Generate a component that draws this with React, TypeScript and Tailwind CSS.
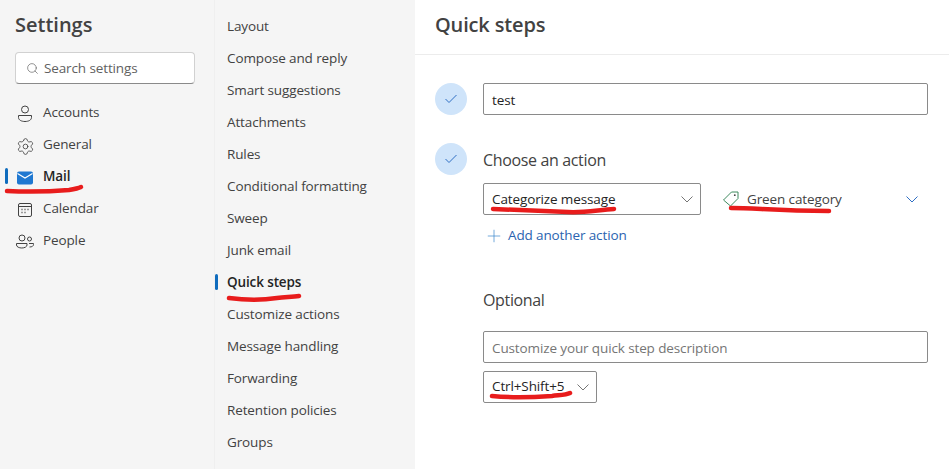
import { Plus, Search, Settings } from "lucide-react"

const font = "font-['Open_Sans','Noto_Sans',sans-serif]"

function Check() {
  return (
    <div className="w-8 h-8 rounded-full bg-[#cfe4fa] flex items-center justify-center shrink-0">
      <svg width="14" height="10" viewBox="0 0 14 10" fill="none" stroke="#2f6fc4" strokeWidth="1">
        <path d="M1.500 5l3.500 3.500 7.500-7.500" />
      </svg>
    </div>
  )
}

function Chev({ color = "#757575" }: { color?: string }) {
  return (
    <svg width="12" height="7" viewBox="0 0 12 7" fill="none" stroke={color} strokeWidth="1" className="shrink-0">
      <path d="M0.500 0.500l5.500 5.500 5.500-5.500" />
    </svg>
  )
}

function AccountIcon() {
  return (
    <svg width="20" height="20" viewBox="0 0 20 20" fill="none" stroke="#424242" strokeWidth="1">
      <circle cx="10" cy="5.500" r="3.500" />
      <path d="M3.500 11.500h13v2c0 2.500-3 4-6.500 4s-6.500-1.500-6.500-4z" />
    </svg>
  )
}

function MailIcon() {
  return (
    <svg width="18" height="16" viewBox="0 0 18 16">
      <rect x="1" y="1.500" width="16" height="13" rx="2" fill="#1f78d1" />
      <path d="M1.500 3.500L9 8l7.500-4.500" fill="none" stroke="#ffffff" strokeWidth="1.200" />
    </svg>
  )
}

function CalendarIcon() {
  return (
    <svg width="20" height="20" viewBox="0 0 20 20" fill="none" stroke="#424242" strokeWidth="1">
      <rect x="3.500" y="3.500" width="13" height="13" rx="1.500" />
      <path d="M3.500 6.500h13" />
      <path d="M6.500 9.500h1M9.500 9.500h1M12.500 9.500h1M6.500 12.500h1M9.500 12.500h1" strokeWidth="1.500" />
    </svg>
  )
}

function PeopleIcon() {
  return (
    <svg width="20" height="20" viewBox="0 0 20 20" fill="none" stroke="#424242" strokeWidth="1">
      <circle cx="7" cy="6" r="3" />
      <circle cx="14.500" cy="7" r="2" />
      <path d="M1.500 11.500h10.500v1.500c0 1.800-2.500 3-5.200 3s-5.300-1.200-5.300-3z" />
      <path d="M14 11.500h4.500v1c0 1.500-1.500 2.500-4 2.500" />
    </svg>
  )
}

function TagIcon() {
  return (
    <svg width="18" height="18" viewBox="0 0 18 18" fill="none" strokeWidth="1" className="shrink-0">
      <path d="M1.500 10L9.500 2h6.500v6.500L8.500 16z" stroke="#3f8a5f" />
      <circle cx="12.800" cy="5.200" r="0.900" fill="#424242" />
    </svg>
  )
}

const nav = [
  { label: "Accounts", icon: <AccountIcon /> },
  { label: "General", icon: <Settings size={19} strokeWidth={1.050} className="text-[#424242]" /> },
  { label: "Mail", icon: <MailIcon />, active: true },
  { label: "Calendar", icon: <CalendarIcon /> },
  { label: "People", icon: <PeopleIcon /> },
]

const sections = [
  "Layout",
  "Compose and reply",
  "Smart suggestions",
  "Attachments",
  "Rules",
  "Conditional formatting",
  "Sweep",
  "Junk email",
  "Quick steps",
  "Customize actions",
  "Message handling",
  "Forwarding",
  "Retention policies",
  "Groups",
]

export default function App() {
  return (
    <div className={`relative w-[949px] h-[469px] overflow-hidden flex bg-white text-[13.5px] tracking-[-0.12px] text-[#424242] ${font}`}>
      {/* settings nav */}
      <div className="w-[215px] shrink-0 bg-[#f5f5f5] border-r border-[#efefef]">
        <h1 className="pl-[15px] pt-[10px] h-[52px] text-[20px] leading-[30px] tracking-normal font-semibold text-[#424242]">Settings</h1>
        <div className="ml-[15px] w-[180px] h-8 bg-white rounded border border-[#d1d1d1] border-b-[#8a8a8a] flex items-center pl-[10px] gap-[5px] text-[#616161]">
          <Search size={13} strokeWidth={1.250} className="text-[#616161]" />
          <span>Search settings</span>
        </div>
        <div className="mt-[12px]">
          {nav.map((n) => (
            <div key={n.label} className={`h-8 flex items-center relative pl-[15px] gap-[8px] ${n.active ? "font-semibold text-[#242424]" : ""}`}>
              {n.active && <div className="absolute left-[5px] top-2 w-[3px] h-4 rounded-sm bg-[#0f6cbd]" />}
              <span className="w-5 h-6 pt-[4px] flex items-center justify-center">{n.icon}</span>
              <span>{n.label}</span>
            </div>
          ))}
        </div>
      </div>

      {/* mail sections */}
      <div className="w-[200px] shrink-0 bg-[#f5f5f5] pt-[10px]">
        {sections.map((s) => (
          <div key={s} className={`h-8 flex items-center relative pl-[12px] ${s === "Quick steps" ? "font-semibold text-[#242424]" : ""}`}>
            {s === "Quick steps" && <div className="absolute left-0 top-2 w-[3px] h-4 rounded-sm bg-[#0f6cbd]" />}
            {s}
          </div>
        ))}
      </div>

      {/* quick step form */}
      <div className="flex-1 min-w-0">
        <div className="h-[55px] border-b border-[#ececec] pl-5 pt-[10px]">
          <h2 className="text-[20px] leading-[30px] tracking-[-0.15px] font-semibold text-[#424242]">Quick steps</h2>
        </div>
        <div className="pl-5 pr-[21px] pt-[28px]">
          <div className="flex gap-[16px]">
            <Check />
            <div className="flex-1 h-8 border border-[#8a8a8a] rounded-[2px] flex items-center px-2 pt-[2px] text-[#242424]">test</div>
          </div>
          <div className="flex gap-[16px] mt-[28px]">
            <Check />
            <div className="flex-1">
              <div className="text-[16px] tracking-[-0.35px] leading-[34px] h-8">Choose an action</div>
              <div className="flex items-center mt-[8px]">
                <div className="w-[218px] h-8 border border-[#8a8a8a] rounded-[2px] flex items-center justify-between pl-2 pr-[7px] text-[#242424]">
                  <span>Categorize message</span>
                  <Chev />
                </div>
                <div className="ml-[21px] flex items-center w-[196px] justify-between">
                  <div className="flex items-center gap-[7px] text-[#424242]">
                    <TagIcon />
                    <span>Green category</span>
                  </div>
                  <Chev color="#2f6fc4" />
                </div>
              </div>
              <div className="flex items-center gap-[4px] mt-[4px] pl-px h-[32px] text-[#2b63b0]">
                <Plus size={20} strokeWidth={0.8} className="text-[#2f7fc9] relative top-px" />
                <span>Add another action</span>
              </div>
              <div className="text-[16px] tracking-[-0.35px] leading-8 h-8 mt-[33px]">Optional</div>
              <div className="h-8 mt-[15px] border border-[#8a8a8a] rounded-[2px] flex items-center px-2 pt-[2px] text-[#757575]">Customize your quick step description</div>
              <div className="w-[114px] h-8 mt-[8px] border border-[#8a8a8a] rounded-[2px] flex items-center justify-between pl-2 pr-[7px] text-[#242424]">
                <span className="pb-[2px]">Ctrl+Shift+5</span>
                <Chev />
              </div>
            </div>
          </div>
        </div>
      </div>

      {/* red marker annotations drawn over the screenshot */}
      <svg className="absolute left-0 top-0 pointer-events-none" width="949" height="469" fill="none" stroke="#e81c1c" strokeWidth="4.500" strokeLinecap="round">
        <path d="M7 191c20 1 50 0 62-1 6-1 10-2 12-3" />
        <path d="M229 298c15 2 35 2 48 0 8-1 15-1 22-2" />
        <path d="M493 209c25 1 50 2 75 3 15 1 30-2 46-3" />
        <path d="M731 208c25 0 45 3 98 3" />
        <path d="M492 396c20 2 45 1 60 0 8-1 14-1 18-3" />
      </svg>
    </div>
  )
}
